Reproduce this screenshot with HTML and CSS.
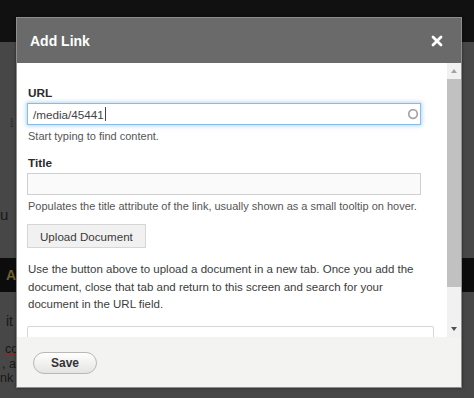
FILE: index.html
```html
<!DOCTYPE html>
<html>
<head>
<meta charset="utf-8">
<link rel="stylesheet" href="styles.css">
</head>
<body>
<div class="topbar"></div>
<div class="page">
  <div class="frac"><span>1</span><span>2</span></div>
  <div class="pline pl-u">u</div>
  <div class="band"><span class="band-a">A</span></div>
  <div class="pline pl-it">it</div>
  <div class="pline pl-co"><span class="spell">co</span></div>
  <div class="pline pl-a">, a</div>
  <div class="pline pl-nk">nk my par</div>
</div>

<div class="dialog">
  <div class="dlg-head">
    <span class="dlg-title">Add Link</span>
    <svg class="close" width="12" height="12" viewBox="0 0 12 12"><path d="M2 2 L10 10 M10 2 L2 10" stroke="#fff" stroke-width="2.8" stroke-linecap="round"/></svg>
  </div>
  <div class="dlg-body">
    <div class="content">
      <div class="label first">URL</div>
      <div class="input focus">
        <span class="val">/media/45441</span><span class="caret"></span>
        <svg class="spinner" width="12" height="12" viewBox="0 0 12 12"><circle cx="6" cy="6" r="4.3" fill="none" stroke="#a5a5a5" stroke-width="1.7"/></svg>
      </div>
      <div class="desc">Start typing to find content.</div>
      <div class="label second">Title</div>
      <div class="input plain"></div>
      <div class="desc">Populates the title attribute of the link, usually shown as a small tooltip on hover.</div>
      <div class="btn-upload">Upload Document</div>
      <p class="para">Use the button above to upload a document in a new tab. Once you add the document, close that tab and return to this screen and search for your document in the URL field.</p>
      <div class="textarea"></div>
    </div>
    <div class="scrollbar">
      <div class="sb-btn"><span class="tri up"></span></div>
      <div class="sb-thumb"></div>
      <div class="sb-track"></div>
      <div class="sb-btn"><span class="tri down"></span></div>
    </div>
  </div>
  <div class="dlg-foot">
    <div class="btn-save">Save</div>
  </div>
</div>
</body>
</html>
```

FILE: styles.css
```css
html, body {
  margin: 0;
  padding: 0;
}
body {
  width: 474px;
  height: 398px;
  overflow: hidden;
  background: #474747;
  font-family: "Liberation Sans", Arial, sans-serif;
  position: relative;
}
.topbar {
  height: 42px;
  background: #111111;
}
.page {
  display: flex;
  flex-direction: column;
  color: #181818;
  font-size: 12.5px;
}
.frac {
  display: flex;
  flex-direction: column;
  margin: 76px 0 0 10px;
  font-size: 6px;
  line-height: 5px;
  color: #222;
}
.pline {
  line-height: 14px;
  height: 14px;
  padding-left: 4px;
}
.pl-u {
  margin-top: 80px;
  padding-left: 0;
  font-size: 15px;
}
.band {
  margin-top: 36px;
  height: 34px;
  background: #0c0c0c;
  display: flex;
  align-items: center;
  padding-left: 6px;
}
.band-a {
  color: #6e6130;
  font-weight: bold;
  font-size: 14px;
}
.pl-it {
  margin-top: 22px;
  padding-left: 6px;
  font-size: 14px;
}
.pl-co {
  margin-top: 14px;
  padding-left: 5px;
}
.spell {
  text-decoration: underline;
  text-decoration-color: #7a2f2a;
}
.pl-a {
  margin-top: 1px;
  padding-left: 2px;
}
.pl-nk {
  margin-top: 0;
  padding-left: 0;
}

.dialog {
  position: absolute;
  left: 16px;
  top: 17px;
  width: 446px;
  height: 371px;
  box-sizing: border-box;
  border: 1px solid #8e8e8e;
  box-shadow: 0 0 3px rgba(0,0,0,0.45);
  display: flex;
  flex-direction: column;
  background: #fff;
}
.dlg-head {
  height: 45px;
  flex: none;
  background: #6a6a6a;
  display: flex;
  align-items: center;
  justify-content: space-between;
  padding: 0 18px 0 13px;
}
.dlg-title {
  color: #fff;
  font-weight: bold;
  font-size: 14px;
}
.close {
  display: block;
}
.dlg-body {
  height: 274px;
  flex: none;
  display: flex;
}
.content {
  flex: 1;
  overflow: hidden;
  padding: 22px 0 0 10px;
  color: #333;
}
.label {
  font-weight: bold;
  font-size: 11.8px;
  line-height: 16px;
  color: #2b2b2b;
  margin-bottom: 2px;
  padding-left: 1px;
}
.label.second {
  margin-top: 12px;
}
.input {
  width: 394px;
  height: 22px;
  box-sizing: border-box;
  border: 1px solid #cfcfcf;
  background: #fafafa;
  display: flex;
  align-items: center;
  padding-left: 5px;
  position: relative;
}
.input.focus {
  background: #fff;
  border-color: #86bde8;
  box-shadow: 0 0 4px 1px rgba(120,180,235,0.55);
}
.val {
  font-size: 11.7px;
  color: #444;
}
.caret {
  display: inline-block;
  width: 1px;
  height: 14px;
  background: #444;
  margin-left: 1px;
}
.spinner {
  position: absolute;
  right: 1px;
  top: 4px;
}
.desc {
  margin-top: 4px;
  font-size: 11px;
  line-height: 14px;
  color: #555;
  padding-left: 1px;
}
.btn-upload {
  margin-top: 11px;
  width: 119px;
  height: 24px;
  box-sizing: border-box;
  border: 1px solid #d6d6d6;
  background: #f1f1f1;
  font-size: 11.6px;
  color: #3a3a3a;
  display: flex;
  align-items: center;
  padding-left: 12px;
}
.para {
  margin: 13px 0 0 0;
  width: 400px;
  font-size: 11.5px;
  line-height: 17.5px;
  color: #3c3c3c;
  padding-left: 1px;
}
.textarea {
  margin-top: 12px;
  width: 407px;
  height: 40px;
  box-sizing: border-box;
  border: 1px solid #d6d6d6;
  border-radius: 2px;
  background: #fff;
}
.scrollbar {
  width: 14px;
  flex: none;
  display: flex;
  flex-direction: column;
  background: #f1f1f1;
}
.sb-btn {
  height: 16px;
  flex: none;
  display: flex;
  align-items: center;
  justify-content: center;
}
.sb-thumb {
  height: 208px;
  flex: none;
  background: #c1c1c1;
}
.sb-track {
  flex: 1;
}
.tri {
  width: 0;
  height: 0;
  border-left: 3.5px solid transparent;
  border-right: 3.5px solid transparent;
}
.tri.up {
  border-bottom: 4px solid #a3a3a3;
}
.tri.down {
  border-top: 4px solid #505050;
}
.dlg-foot {
  flex: 1;
  background: #f3f3f2;
  padding: 15px 0 0 16px;
}
.btn-save {
  width: 64px;
  height: 22px;
  box-sizing: border-box;
  border: 1px solid #b8b8b8;
  border-radius: 11px;
  background: linear-gradient(#ffffff, #e4e4e2);
  font-weight: bold;
  font-size: 12px;
  color: #333;
  display: flex;
  align-items: center;
  justify-content: center;
}
```
